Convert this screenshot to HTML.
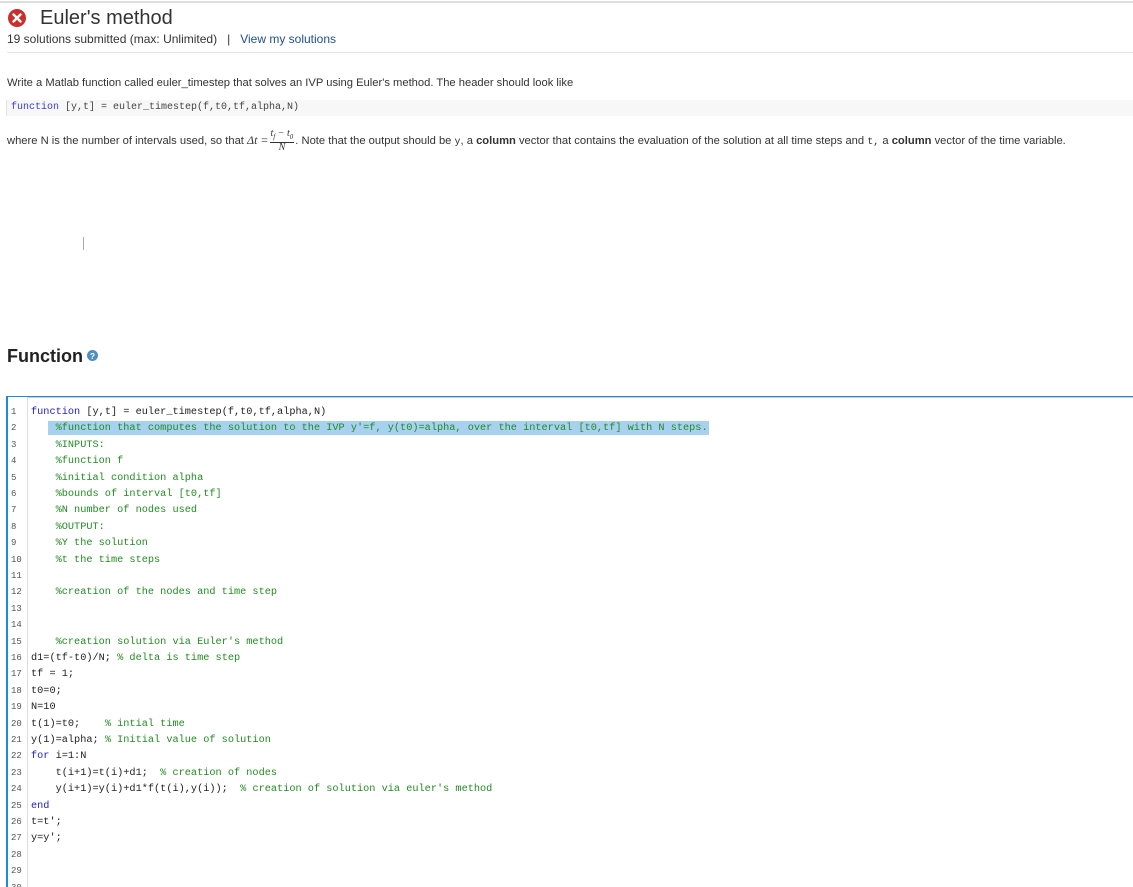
<!DOCTYPE html>
<html><head><meta charset="utf-8">
<style>
html,body{margin:0;padding:0;background:#fff;width:1133px;height:887px;overflow:hidden;font-family:"Liberation Sans",Arial,sans-serif;color:#333;position:relative}
.abs{position:absolute;white-space:nowrap}
.top{position:absolute;left:0;top:1px;width:1133px;height:2px;background:#ddd}
.code{font-family:"Liberation Mono",monospace;font-size:10px}
.ed{position:absolute;left:6px;top:396px;width:1127px;height:491px;border-top:1px solid #1e88e5;border-left:2px solid #1e88e5;box-shadow:inset 0 1px 0 #ccc}
.gut{position:absolute;left:0;top:0;width:19px;height:100%;border-right:1px solid #ddd;background:#fff}
.ln{position:absolute;left:3px;font-family:"Liberation Mono",monospace;font-size:9px;color:#555}
.cl{position:absolute;left:23px;font-family:"Liberation Mono",monospace;font-size:10.25px;color:#222;white-space:pre}
.kw{color:#2020d0}
.cm,.cl.cm{color:#228b22}
</style></head><body>
<div class="top"></div>
<svg class="abs" style="left:8px;top:9px" width="18" height="18" viewBox="0 0 18 18"><circle cx="9" cy="9" r="9" fill="#c9302c"/><path d="M5.5 5.5L12.5 12.5M12.5 5.5L5.5 12.5" stroke="#fff" stroke-width="2.4" stroke-linecap="round"/></svg>
<div class="abs" style="left:40px;top:7px;font-size:20px;color:#333">Euler's method</div>
<div class="abs" style="left:7px;top:32px;font-size:12px;color:#333">19 solutions submitted (max: Unlimited) &nbsp;&nbsp;|&nbsp;&nbsp; <span style="color:#1f4e8c">View my solutions</span></div>
<div class="abs" style="left:7px;top:52px;width:1126px;height:1px;background:#e5e5e5"></div>
<div class="abs" style="left:7px;top:77px;font-size:11.2px;color:#333">Write a Matlab function called euler_timestep that solves an IVP using Euler's method. The header should look like</div>
<div class="abs" style="left:6px;top:100px;width:1127px;height:16px;background:#f7f7f7;border-left:1px solid #e3e3e3"></div>
<div class="abs code" style="left:11px;top:102px;color:#444"><span class="kw" style="color:#3b3bd0">function</span> [y,t] = euler_timestep(f,t0,tf,alpha,N)</div>
<div class="abs" style="left:7px;top:129px;font-size:11.2px;color:#333">where N is the number of intervals used, so that <span style="font-family:'Liberation Serif',serif;font-style:italic;font-size:12px">&Delta;t =</span><span style="display:inline-block;vertical-align:middle;text-align:center;font-family:'Liberation Serif',serif;font-style:italic;font-size:10px;line-height:10px;margin:0 1px"><span style="display:block;border-bottom:1px solid #333;padding:0 1px">t<sub style="font-size:7px">f</sub> &minus; t<sub style="font-size:7px">0</sub></span><span style="display:block">N</span></span>. Note that the output should be <span class="code">y</span>, a <b>column</b> vector that contains the evaluation of the solution at all time steps and <span class="code">t,</span> a <b>column</b> vector of the time variable.</div>
<div class="abs" style="left:83px;top:237px;width:1px;height:13px;background:#aaa"></div>
<div class="abs" style="left:7px;top:346px;font-size:18px;font-weight:bold;color:#222">Function</div>
<svg class="abs" style="left:87px;top:350px" width="11" height="11" viewBox="0 0 11 11"><circle cx="5.5" cy="5.5" r="5.5" fill="#4f8fc0"/><text x="5.5" y="9" font-size="8.5" font-weight="bold" text-anchor="middle" fill="#fff" font-family="Liberation Sans">?</text></svg>
<div class="ed">
<div class="gut"></div>
<div class="abs" style="left:40px;top:24px;width:661px;height:14px;background:#a8d1f0"></div>
</div>
<div style="position:absolute;left:8px;top:402px">
<div class="ln" style="top:5px">1</div><div class="cl" style="top:4px"><span class="kw">function</span> [y,t] = euler_timestep(f,t0,tf,alpha,N)</div>
<div class="ln" style="top:21.4px">2</div><div class="cl cm" style="top:20.4px">    %function that computes the solution to the IVP y'=f, y(t0)=alpha, over the interval [t0,tf] with N steps.</div>
<div class="ln" style="top:37.8px">3</div><div class="cl cm" style="top:36.8px">    %INPUTS:</div>
<div class="ln" style="top:54.2px">4</div><div class="cl cm" style="top:53.2px">    %function f</div>
<div class="ln" style="top:70.6px">5</div><div class="cl cm" style="top:69.6px">    %initial condition alpha</div>
<div class="ln" style="top:87px">6</div><div class="cl cm" style="top:86px">    %bounds of interval [t0,tf]</div>
<div class="ln" style="top:103.4px">7</div><div class="cl cm" style="top:102.4px">    %N number of nodes used</div>
<div class="ln" style="top:119.8px">8</div><div class="cl cm" style="top:118.8px">    %OUTPUT:</div>
<div class="ln" style="top:136.2px">9</div><div class="cl cm" style="top:135.2px">    %Y the solution</div>
<div class="ln" style="top:152.6px">10</div><div class="cl cm" style="top:151.6px">    %t the time steps</div>
<div class="ln" style="top:169px">11</div>
<div class="ln" style="top:185.4px">12</div><div class="cl cm" style="top:184.4px">    %creation of the nodes and time step</div>
<div class="ln" style="top:201.8px">13</div>
<div class="ln" style="top:218.2px">14</div>
<div class="ln" style="top:234.6px">15</div><div class="cl cm" style="top:233.6px">    %creation solution via Euler's method</div>
<div class="ln" style="top:251px">16</div><div class="cl" style="top:250px">d1=(tf-t0)/N; <span class="cm">% delta is time step</span></div>
<div class="ln" style="top:267.4px">17</div><div class="cl" style="top:266.4px">tf = 1;</div>
<div class="ln" style="top:283.8px">18</div><div class="cl" style="top:282.8px">t0=0;</div>
<div class="ln" style="top:300.2px">19</div><div class="cl" style="top:299.2px">N=10</div>
<div class="ln" style="top:316.6px">20</div><div class="cl" style="top:315.6px">t(1)=t0;    <span class="cm">% intial time</span></div>
<div class="ln" style="top:333px">21</div><div class="cl" style="top:332px">y(1)=alpha; <span class="cm">% Initial value of solution</span></div>
<div class="ln" style="top:349.4px">22</div><div class="cl" style="top:348.4px"><span class="kw">for</span> i=1:N</div>
<div class="ln" style="top:365.8px">23</div><div class="cl" style="top:364.8px">    t(i+1)=t(i)+d1;  <span class="cm">% creation of nodes</span></div>
<div class="ln" style="top:382.2px">24</div><div class="cl" style="top:381.2px">    y(i+1)=y(i)+d1*f(t(i),y(i));  <span class="cm">% creation of solution via euler's method</span></div>
<div class="ln" style="top:398.6px">25</div><div class="cl" style="top:397.6px"><span class="kw">end</span></div>
<div class="ln" style="top:415px">26</div><div class="cl" style="top:414px">t=t';</div>
<div class="ln" style="top:431.4px">27</div><div class="cl" style="top:430.4px">y=y';</div>
<div class="ln" style="top:447.8px">28</div>
<div class="ln" style="top:464.2px">29</div>
<div class="ln" style="top:480.6px">30</div>
</div>
</body></html>
